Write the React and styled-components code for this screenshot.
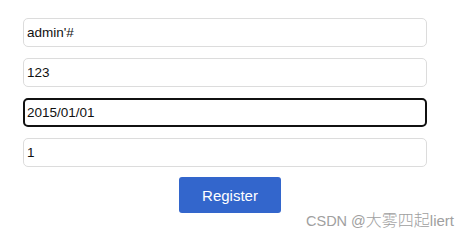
import React from "react";
import styled, { createGlobalStyle } from "styled-components";

const Global = createGlobalStyle`
  html, body { margin: 0; padding: 0; background: #fff; }
  body { width: 474px; height: 237px; overflow: hidden; font-family: "Liberation Sans", Arial, sans-serif; }
`;

const Page = styled.div`
  position: relative;
  width: 474px;
  height: 237px;
  box-sizing: border-box;
  padding: 18px 0 0 23px;
`;

const Form = styled.form`
  display: flex;
  flex-direction: column;
  gap: 11px;
  width: 404px;
`;

const Field = styled.div`
  box-sizing: border-box;
  height: 29px;
  border: ${(p) => (p.$focused ? "2px solid #111" : "1.5px solid #dcdcdc")};
  border-radius: 5px;
  display: flex;
  align-items: center;
  padding-left: ${(p) => (p.$focused ? "2px" : "3px")};
  font-size: 13.5px;
  color: #111;
  background: #fff;
`;

const Button = styled.button`
  margin-top: -1px;
  margin-left: 156px;
  width: 102px;
  height: 36px;
  border: none;
  border-radius: 3px;
  background: #3366cc;
  color: #fff;
  font-family: "Liberation Sans", Arial, sans-serif;
  font-size: 15px;
  padding: 0;
`;

const Watermark = styled.div`
  position: absolute;
  left: 306px;
  top: 211px;
  display: flex;
  align-items: baseline;
  font-family: "Liberation Sans", "Noto Sans CJK SC", sans-serif;
  line-height: 20px;
  color: #a0a0a0;
  white-space: nowrap;
`;

const Part = styled.span`
  font-size: ${(p) => p.$size}px;
  font-weight: ${(p) => p.$weight || 400};
  margin-left: ${(p) => p.$gap || 0}px;
`;

export default function App() {
  return (
    <>
      <Global />
      <Page>
        <Form>
          <Field>admin'#</Field>
          <Field>123</Field>
          <Field $focused>2015/01/01</Field>
          <Field>1</Field>
          <Button type="button">Register</Button>
        </Form>
        <Watermark>
          <Part $size={14.5}>CSDN @</Part>
          <Part $size={16} $weight={300}>大雾四起</Part>
          <Part $size={15}>liert</Part>
        </Watermark>
      </Page>
    </>
  );
}
